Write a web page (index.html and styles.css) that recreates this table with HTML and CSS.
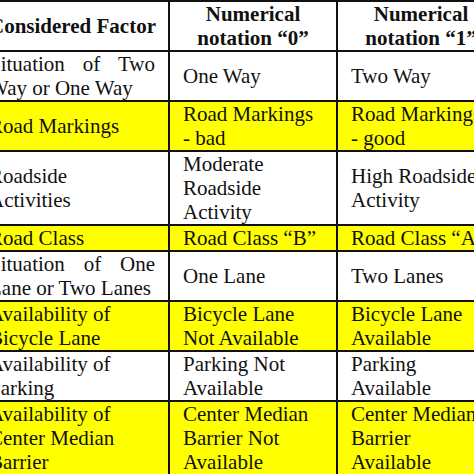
FILE: index.html
```html
<!DOCTYPE html>
<html>
<head>
<meta charset="utf-8">
<link rel="stylesheet" href="styles.css">
</head>
<body>
<table class="factors">
  <colgroup>
    <col class="c1"><col class="c2"><col class="c3">
  </colgroup>
  <thead>
    <tr>
      <th>Considered Factor</th>
      <th>Numerical<br>notation “0”</th>
      <th>Numerical<br>notation “1”</th>
    </tr>
  </thead>
  <tbody>
    <tr>
      <td><span class="jl">Situation of Two</span>Way or One Way</td>
      <td>One Way</td>
      <td>Two Way</td>
    </tr>
    <tr class="hl">
      <td>Road Markings</td>
      <td>Road Markings<br>- bad</td>
      <td>Road Markings<br>- good</td>
    </tr>
    <tr>
      <td>Roadside<br>Activities</td>
      <td>Moderate<br>Roadside<br>Activity</td>
      <td>High Roadside<br>Activity</td>
    </tr>
    <tr class="hl">
      <td>Road Class</td>
      <td>Road Class “B”</td>
      <td>Road Class “A”</td>
    </tr>
    <tr>
      <td><span class="jl">Situation of One</span>Lane or Two Lanes</td>
      <td>One Lane</td>
      <td>Two Lanes</td>
    </tr>
    <tr class="hl">
      <td>Availability of<br>Bicycle Lane</td>
      <td>Bicycle Lane<br>Not Available</td>
      <td>Bicycle Lane<br>Available</td>
    </tr>
    <tr>
      <td>Availability of<br>Parking</td>
      <td>Parking Not<br>Available</td>
      <td>Parking<br>Available</td>
    </tr>
    <tr class="hl">
      <td>Availability of<br>Center Median<br>Barrier</td>
      <td>Center Median<br>Barrier Not<br>Available</td>
      <td>Center Median<br>Barrier<br>Available</td>
    </tr>
  </tbody>
</table>
</body>
</html>
```

FILE: styles.css
```css
html, body {
  margin: 0;
  padding: 0;
  background: #ffffff;
  overflow: hidden;
}

body {
  width: 474px;
  height: 474px;
}

.factors {
  margin-left: -26px;
  border-collapse: collapse;
  table-layout: fixed;
  width: 530px;
  font-family: "Liberation Serif", "Times New Roman", serif;
  font-size: 21px;
  line-height: 24px;
  color: #111111;
}

.c1 { width: 194px; }
.c2 { width: 168px; }
.c3 { width: 168px; }

.factors th,
.factors td {
  border: 2px solid #111111;
  padding: 0 13px;
  vertical-align: middle;
  text-align: left;
  white-space: nowrap;
}

.factors th {
  font-weight: bold;
  text-align: center;
}

.hl td {
  background: #ffff00;
}

.jl {
  display: block;
  text-align: justify;
  text-align-last: justify;
}
```
